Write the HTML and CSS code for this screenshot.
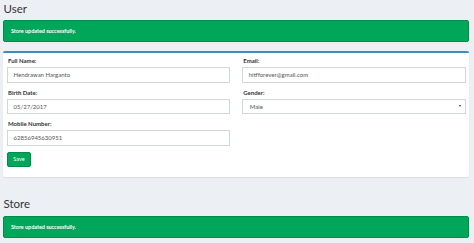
FILE: index.html
```html
<!DOCTYPE html>
<html>
<head>
<meta charset="utf-8">
<link rel="stylesheet" href="styles.css">
</head>
<body>
<div class="page">
  <section class="section">
    <h1 class="title">User</h1>
    <div class="alert">Store updated successfully.</div>
    <div class="box">
      <div class="grid">
        <div class="col">
          <div class="group">
            <label class="label">Full Name:</label>
            <div class="input">Hendrawan Harganto</div>
          </div>
          <div class="group">
            <label class="label">Birth Date:</label>
            <div class="input">05/27/2017</div>
          </div>
          <div class="group">
            <label class="label">Mobile Number:</label>
            <div class="input">62856945630951</div>
          </div>
        </div>
        <div class="col">
          <div class="group">
            <label class="label">Email:</label>
            <div class="input">hitfforever@gmail.com</div>
          </div>
          <div class="group">
            <label class="label">Gender:</label>
            <div class="input select"><span class="sel-text">Male</span><span class="caret"></span></div>
          </div>
        </div>
      </div>
      <button class="btn">Save</button>
    </div>
  </section>
  <section class="section store">
    <h1 class="title">Store</h1>
    <div class="alert">Store updated successfully.</div>
  </section>
</div>
</body>
</html>
```

FILE: styles.css
```css
* { box-sizing: border-box; }
html, body {
  margin: 0;
  padding: 0;
  background: #ecf0f5;
}
body {
  font-family: "Lato", "Noto Sans", sans-serif;
  color: #333;
  width: 474px;
  height: 243px;
  overflow: hidden;
}
.page {
  padding: 2px 5.5px 0 3px;
}
.section {
  display: flex;
  flex-direction: column;
}
.store {
  margin-top: 20px;
}
.title {
  margin: 0 0 4px 0;
  font-size: 11.5px;
  line-height: 14px;
  font-weight: 400;
  color: #333;
  padding-left: 0.5px;
}
.store .title {
  margin-bottom: 5px;
}
.alert {
  background: #00a65a;
  border: 1px solid #008d4c;
  border-radius: 2px;
  color: #fff;
  height: 22px;
  display: flex;
  align-items: center;
  padding-left: 7px;
  font-size: 5.4px;
  font-weight: 700;
}
.box {
  margin-top: 8.5px;
  background: #fff;
  border-top: 2px solid #3c8dbc;
  border-radius: 2px;
  box-shadow: 0 1px 1px rgba(0,0,0,0.08);
  padding: 4.5px 3px 10px 4px;
}
.grid {
  display: grid;
  grid-template-columns: 1fr 1fr;
  column-gap: 12px;
}
.col {
  display: flex;
  flex-direction: column;
}
.group {
  display: flex;
  flex-direction: column;
  margin-bottom: 6px;
}
.label {
  font-size: 6px;
  line-height: 7px;
  font-weight: 700;
  color: #333;
  margin-bottom: 3px;
  padding-left: 1px;
}
.input {
  height: 15.5px;
  border: 1px solid #d2d6de;
  background: #fff;
  display: flex;
  align-items: center;
  padding-left: 5.5px;
  font-size: 6px;
  color: #555;
}
.select {
  justify-content: space-between;
  padding-left: 6.5px;
  padding-right: 4px;
}
.caret {
  width: 0;
  height: 0;
  border-left: 1.6px solid transparent;
  border-right: 1.6px solid transparent;
  border-top: 2.4px solid #333;
}
.btn {
  align-self: flex-start;
  width: 24px;
  height: 15px;
  background: #00a65a;
  border: 1px solid #008d4c;
  border-radius: 2px;
  color: #fff;
  font-family: "Lato", "Noto Sans", sans-serif;
  font-size: 5.5px;
  padding: 0;
  display: block;
}
```
